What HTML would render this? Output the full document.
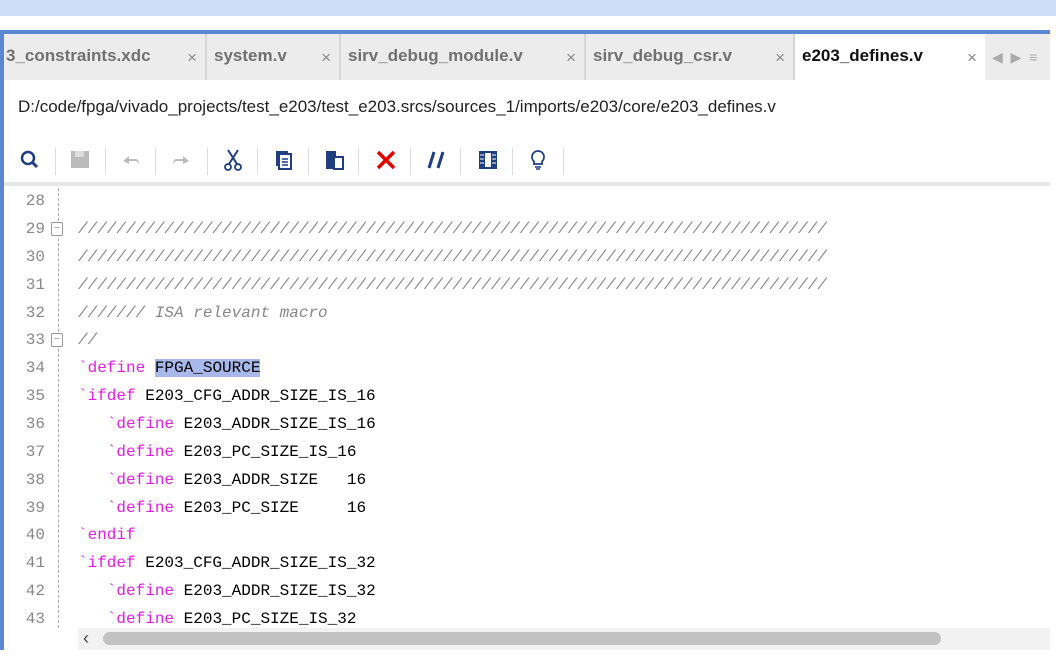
<!DOCTYPE html>
<html><head><style>
body{margin:0;width:1056px;height:650px;overflow:hidden;background:#fff;font-family:"Liberation Sans",sans-serif;position:relative}
.abs{position:absolute}
.tab{position:absolute;top:34px;height:46px;background:#ececec;color:#707070;font-weight:bold;font-size:17px;line-height:44px;border-right:2px solid #d6d6d6;box-sizing:border-box;padding-left:7px}
.tab .x{position:absolute;right:8px;top:2px;font-weight:normal;color:#888;font-size:17px}
.code{position:absolute;left:0;top:188px;font-family:"Liberation Mono",monospace;font-size:16px;line-height:27.87px;white-space:pre}
.ln{position:absolute;left:0;width:45px;text-align:right;color:#888}
.tx{position:absolute;left:78px;color:#000}
.c{color:#888;font-style:italic}
.k{color:#e020e0}
.sep{position:absolute;top:147px;width:1px;height:28px;background:#ddd}
svg.i{position:absolute;top:149px}
</style></head><body>
<div class="abs" style="left:0;top:0;width:1056px;height:16px;background:#cddcf7"></div>
<div class="abs" style="left:0;top:30px;width:1050px;height:4px;background:#5b86d1"></div>
<div class="abs" style="left:0;top:30px;width:4px;height:620px;background:#5b86d1"></div>
<div class="abs" style="left:4px;top:34px;width:1046px;height:46px;background:#ececec"></div>
<div class="tab" style="left:4px;width:203px;padding-left:2px">3_constraints.xdc<span class="x">×</span></div>
<div class="tab" style="left:207px;width:134px">system.v<span class="x">×</span></div>
<div class="tab" style="left:341px;width:245px">sirv_debug_module.v<span class="x">×</span></div>
<div class="tab" style="left:586px;width:209px">sirv_debug_csr.v<span class="x">×</span></div>
<div class="tab" style="left:795px;width:190px;background:#fff;color:#111;border:none">e203_defines.v<span class="x">×</span></div>
<div class="abs" style="left:992px;top:34px;line-height:46px;color:#aaa;font-size:14px">◀ &nbsp;▶ &nbsp;≡</div>
<div class="abs" style="left:18px;top:97px;font-size:17px;color:#222">D:/code/fpga/vivado_projects/test_e203/test_e203.srcs/sources_1/imports/e203/core/e203_defines.v</div>

<svg class="i" style="left:20px" width="20" height="22" viewBox="0 0 20 22"><circle cx="8" cy="9" r="6" fill="none" stroke="#1f3f80" stroke-width="2.5"/><path d="M12 13l5 5" stroke="#1f3f80" stroke-width="3"/></svg>
<svg class="i" style="left:70px" width="20" height="22" viewBox="0 0 20 22"><rect x="1" y="2" width="18" height="17" fill="#bbb"/><rect x="5" y="2" width="9" height="6" fill="#ddd"/></svg>
<svg class="i" style="left:120px" width="22" height="22" viewBox="0 0 22 22"><path d="M3 12l6-5v3h6c3 0 4 2 4 5c-1-2-2-3-4-3H9v3z" fill="#bbb"/></svg>
<svg class="i" style="left:170px" width="22" height="22" viewBox="0 0 22 22"><path d="M19 12l-6-5v3H7c-3 0-4 2-4 5c1-2 2-3 4-3h6v3z" fill="#bbb"/></svg>
<svg class="i" style="left:223px" width="20" height="22" viewBox="0 0 20 22"><path d="M5 1l9 14M15 1L6 15" stroke="#1f3f80" stroke-width="2"/><circle cx="5" cy="18" r="3" fill="none" stroke="#1f3f80" stroke-width="1.8"/><circle cx="15" cy="18" r="3" fill="none" stroke="#1f3f80" stroke-width="1.8"/></svg>
<svg class="i" style="left:274px" width="20" height="22" viewBox="0 0 20 22"><rect x="2" y="2" width="12" height="15" fill="#1f3f80"/><rect x="5" y="5" width="12" height="15" fill="#fff" stroke="#1f3f80" stroke-width="2"/><path d="M8 10h6M8 13h6M8 16h6" stroke="#1f3f80" stroke-width="1.5"/></svg>
<svg class="i" style="left:324px" width="22" height="22" viewBox="0 0 22 22"><rect x="2" y="2" width="10" height="18" fill="#1f3f80"/><rect x="10" y="8" width="9" height="12" fill="#fff" stroke="#1f3f80" stroke-width="2"/></svg>
<svg class="i" style="left:375px" width="22" height="22" viewBox="0 0 22 22"><path d="M3 3l16 16M19 3L3 19" stroke="#e00000" stroke-width="3.5"/></svg>
<svg class="i" style="left:426px" width="22" height="22" viewBox="0 0 22 22"><path d="M8 3L3 19M17 3l-5 16" stroke="#1f3f80" stroke-width="3"/></svg>
<svg class="i" style="left:477px" width="22" height="22" viewBox="0 0 22 22"><rect x="2" y="2" width="18" height="18" fill="#1f3f80"/><rect x="8" y="4" width="6" height="14" fill="#fff"/><path d="M3 6h4M3 10h4M3 14h4M15 6h4M15 10h4M15 14h4" stroke="#fff" stroke-width="1"/></svg>
<svg class="i" style="left:528px" width="20" height="22" viewBox="0 0 20 22"><path d="M10 2a6 6 0 0 0-4 10.5V15h8v-2.5A6 6 0 0 0 10 2z" fill="none" stroke="#1f3f80" stroke-width="1.8"/><path d="M7 18h6M8 20h4" stroke="#1f3f80" stroke-width="1.6"/></svg>

<div class="sep" style="left:55px"></div><div class="sep" style="left:105px"></div><div class="sep" style="left:155px"></div><div class="sep" style="left:207px"></div><div class="sep" style="left:257px"></div><div class="sep" style="left:308px"></div><div class="sep" style="left:358px"></div><div class="sep" style="left:410px"></div><div class="sep" style="left:460px"></div><div class="sep" style="left:512px"></div><div class="sep" style="left:563px"></div>
<div class="abs" style="left:4px;top:182px;width:1046px;height:4px;background:#e6e6e6"></div>
<div class="abs" style="left:58px;top:188px;height:440px;border-left:1px dashed #aaa"></div>
<div class="code">
<div class="ln" style="top:0">28</div>
<div class="ln" style="top:27.87px">29</div><div class="tx" style="top:27.87px"><span class="c">//////////////////////////////////////////////////////////////////////////////</span></div>
<div class="ln" style="top:55.74px">30</div><div class="tx" style="top:55.74px"><span class="c">//////////////////////////////////////////////////////////////////////////////</span></div>
<div class="ln" style="top:83.6px">31</div><div class="tx" style="top:83.6px"><span class="c">//////////////////////////////////////////////////////////////////////////////</span></div>
<div class="ln" style="top:111.5px">32</div><div class="tx" style="top:111.5px"><span class="c">/////// ISA relevant macro</span></div>
<div class="ln" style="top:139.3px">33</div><div class="tx" style="top:139.3px"><span class="c">//</span></div>
<div class="ln" style="top:167.2px">34</div><div class="tx" style="top:167.2px"><span class="k">`define</span> <span style="background:#a8b8ea">FPGA_SOURCE</span></div>
<div class="ln" style="top:195.1px">35</div><div class="tx" style="top:195.1px"><span class="k">`ifdef</span> E203_CFG_ADDR_SIZE_IS_16</div>
<div class="ln" style="top:223px">36</div><div class="tx" style="top:223px">   <span class="k">`define</span> E203_ADDR_SIZE_IS_16</div>
<div class="ln" style="top:250.8px">37</div><div class="tx" style="top:250.8px">   <span class="k">`define</span> E203_PC_SIZE_IS_16</div>
<div class="ln" style="top:278.7px">38</div><div class="tx" style="top:278.7px">   <span class="k">`define</span> E203_ADDR_SIZE   16</div>
<div class="ln" style="top:306.6px">39</div><div class="tx" style="top:306.6px">   <span class="k">`define</span> E203_PC_SIZE     16</div>
<div class="ln" style="top:334.4px">40</div><div class="tx" style="top:334.4px"><span class="k">`endif</span></div>
<div class="ln" style="top:362.3px">41</div><div class="tx" style="top:362.3px"><span class="k">`ifdef</span> E203_CFG_ADDR_SIZE_IS_32</div>
<div class="ln" style="top:390.2px">42</div><div class="tx" style="top:390.2px">   <span class="k">`define</span> E203_ADDR_SIZE_IS_32</div>
<div class="ln" style="top:418px">43</div><div class="tx" style="top:418px">   <span class="k">`define</span> E203_PC_SIZE_IS_32</div>
</div>
<div class="abs" style="left:51px;top:222px;width:10px;height:12px;border:1px solid #999;border-radius:2px;background:#fff;font-size:10px;line-height:11px;text-align:center;color:#888">−</div>
<div class="abs" style="left:51px;top:333px;width:10px;height:12px;border:1px solid #999;border-radius:2px;background:#fff;font-size:10px;line-height:11px;text-align:center;color:#888">−</div>
<div class="abs" style="left:78px;top:628px;width:972px;height:22px;background:#f2f2f2"></div>
<div class="abs" style="left:83px;top:628px;font-size:18px;color:#444">&#x2039;</div>
<div class="abs" style="left:103px;top:632px;width:838px;height:13px;border-radius:7px;background:#c2c2c2"></div>
</body></html>
